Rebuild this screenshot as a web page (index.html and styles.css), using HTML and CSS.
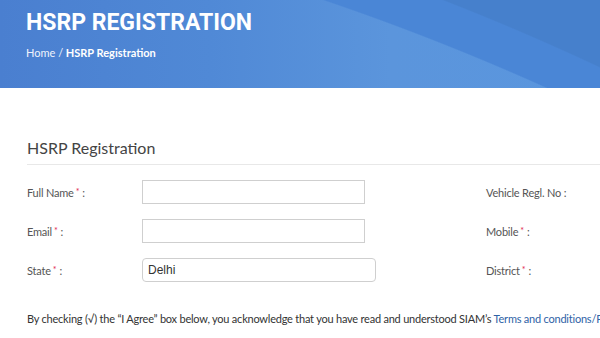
FILE: index.html
```html
<!DOCTYPE html>
<html lang="en">
<head>
  <meta charset="UTF-8" />
  <meta name="viewport" content="width=device-width, initial-scale=1.0" />
  <title>HSRP Registration</title>
  <link rel="stylesheet" href="styles.css">
</head>
<body>
  <header class="banner">
    <h1>HSRP REGISTRATION</h1>
    <p class="crumbs"><span class="crumb-home">Home /</span> HSRP Registration</p>
  </header>

  <main class="content">
    <h2 class="section-title">HSRP Registration</h2>

    <form class="reg-form">
      <div class="row">
        <label class="lbl">Full Name<span class="req">*</span>:</label>
        <div class="field"><input class="box" type="text"></div>
        <label class="lbl">Vehicle Regl. No :</label>
      </div>
      <div class="row">
        <label class="lbl">Email<span class="req">*</span>:</label>
        <div class="field"><input class="box" type="email"></div>
        <label class="lbl">Mobile<span class="req">*</span>:</label>
      </div>
      <div class="row">
        <label class="lbl">State<span class="req">*</span>:</label>
        <div class="field"><input class="box box-select" type="text" value="Delhi"></div>
        <label class="lbl">District<span class="req">*</span>:</label>
      </div>
    </form>

    <p class="agree">By checking (&radic;) the &ldquo;I Agree&rdquo; box below, you acknowledge that you have read and understood SIAM&rsquo;s <a href="#">Terms and conditions/Privacy Policy</a></p>
  </main>
</body>
</html>
```

FILE: styles.css
```css
* {
  margin: 0;
  padding: 0;
  box-sizing: border-box;
}
body {
  font-family: Lato, "Open Sans", sans-serif;
  background: #fff;
  color: #444;
  overflow: hidden;
}
.banner {
  height: 88px;
  padding: 8px 26px 0;
  color: #fff;
  background:
    radial-gradient(circle 2545px at -479px 2366px, transparent 99.75%, #4680cc 99.8%),
    radial-gradient(circle 2504px at -479px 2366px, transparent 99.75%, #4a86d6 99.8%),
    linear-gradient(90deg, #4a7fd0 0%, #5089d6 35%, #5b95dc 65%, #5a96de 100%);
}
.banner h1 {
  font-family: Roboto, "Liberation Sans", sans-serif;
  font-weight: 700;
  font-size: 23px;
  line-height: 30px;
}
.crumbs {
  margin-top: 8px;
  font-size: 11px;
  line-height: 14px;
  font-weight: 700;
}
.crumb-home {
  font-weight: 400;
  color: #eef3fc;
}
.content {
  padding: 50px 0 0 27px;
}
.section-title {
  font-size: 16px;
  font-weight: 400;
  line-height: 20px;
  color: #444;
  padding-bottom: 6px;
  border-bottom: 1px solid #e8e8e8;
}
.reg-form {
  padding-top: 15px;
}
.row {
  display: grid;
  grid-template-columns: 115px 344px auto;
  align-items: center;
  height: 24px;
  margin-bottom: 15px;
}
.lbl {
  font-size: 11px;
  letter-spacing: -0.2px;
  color: #555;
  white-space: nowrap;
}
.req {
  color: #e0284f;
  font-size: 9px;
  vertical-align: 2px;
  margin: 0 3px 0 2px;
}
.box {
  display: block;
  width: 223px;
  height: 24px;
  border: 1px solid #cfcfcf;
  background: #fff;
  font-family: "Liberation Sans", Arial, sans-serif;
  font-size: 12px;
  color: #333;
  padding: 0 5px;
}
.box-select {
  width: 234px;
  border-radius: 4px;
}
.agree {
  margin-top: 28px;
  font-size: 11px;
  letter-spacing: -0.22px;
  line-height: 18px;
  color: #333;
  white-space: nowrap;
}
.agree a {
  color: #2f62a6;
  text-decoration: none;
}
```
